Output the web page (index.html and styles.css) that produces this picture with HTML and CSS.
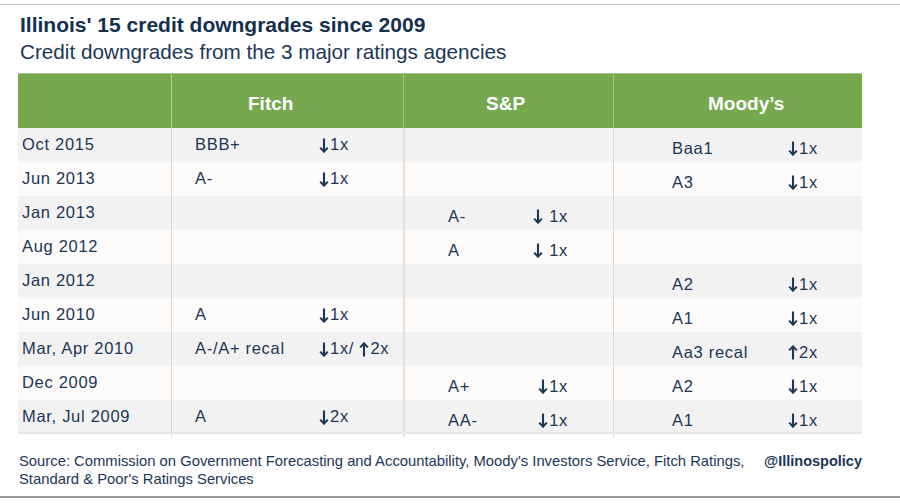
FILE: index.html
```html
<!DOCTYPE html>
<html>
<head>
<meta charset="utf-8">
<link rel="stylesheet" href="styles.css">
</head>
<body>
<div class="page">
  <div class="rule-top"></div>
  <div class="heading">
    <h1 class="title">Illinois' 15 credit downgrades since 2009</h1>
    <p class="subtitle">Credit downgrades from the 3 major ratings agencies</p>
  </div>
  <div class="table">
    <div class="row head">
      <div class="hc"></div>
      <div class="hc fitch">Fitch</div>
      <div class="hc sp">S&amp;P</div>
      <div class="hc moodys">Moody’s</div>
    </div>
    <div class="row odd">
      <div class="c date">Oct 2015</div>
      <div class="c fitch"><span class="r">BBB+</span><span class="d"><svg class="arr" viewBox="0 0 10 15"><path d="M5 0.5V13.5M1.2 9.6L5 13.6L8.8 9.6"/></svg>1x</span></div>
      <div class="c sp"></div>
      <div class="c moodys"><span class="r">Baa1</span><span class="d"><svg class="arr" viewBox="0 0 10 15"><path d="M5 0.5V13.5M1.2 9.6L5 13.6L8.8 9.6"/></svg>1x</span></div>
    </div>
    <div class="row even">
      <div class="c date">Jun 2013</div>
      <div class="c fitch"><span class="r">A-</span><span class="d"><svg class="arr" viewBox="0 0 10 15"><path d="M5 0.5V13.5M1.2 9.6L5 13.6L8.8 9.6"/></svg>1x</span></div>
      <div class="c sp"></div>
      <div class="c moodys"><span class="r">A3</span><span class="d"><svg class="arr" viewBox="0 0 10 15"><path d="M5 0.5V13.5M1.2 9.6L5 13.6L8.8 9.6"/></svg>1x</span></div>
    </div>
    <div class="row odd">
      <div class="c date">Jan 2013</div>
      <div class="c fitch"></div>
      <div class="c sp"><span class="r">A-</span><span class="d"><svg class="arr" viewBox="0 0 10 15"><path d="M5 0.5V13.5M1.2 9.6L5 13.6L8.8 9.6"/></svg> 1x</span></div>
      <div class="c moodys"></div>
    </div>
    <div class="row even">
      <div class="c date">Aug 2012</div>
      <div class="c fitch"></div>
      <div class="c sp"><span class="r">A</span><span class="d"><svg class="arr" viewBox="0 0 10 15"><path d="M5 0.5V13.5M1.2 9.6L5 13.6L8.8 9.6"/></svg> 1x</span></div>
      <div class="c moodys"></div>
    </div>
    <div class="row odd">
      <div class="c date">Jan 2012</div>
      <div class="c fitch"></div>
      <div class="c sp"></div>
      <div class="c moodys"><span class="r">A2</span><span class="d"><svg class="arr" viewBox="0 0 10 15"><path d="M5 0.5V13.5M1.2 9.6L5 13.6L8.8 9.6"/></svg>1x</span></div>
    </div>
    <div class="row even">
      <div class="c date">Jun 2010</div>
      <div class="c fitch"><span class="r">A</span><span class="d"><svg class="arr" viewBox="0 0 10 15"><path d="M5 0.5V13.5M1.2 9.6L5 13.6L8.8 9.6"/></svg>1x</span></div>
      <div class="c sp"></div>
      <div class="c moodys"><span class="r">A1</span><span class="d"><svg class="arr" viewBox="0 0 10 15"><path d="M5 0.5V13.5M1.2 9.6L5 13.6L8.8 9.6"/></svg>1x</span></div>
    </div>
    <div class="row odd">
      <div class="c date">Mar, Apr 2010</div>
      <div class="c fitch"><span class="r">A-/A+ recal</span><span class="d"><svg class="arr" viewBox="0 0 10 15"><path d="M5 0.5V13.5M1.2 9.6L5 13.6L8.8 9.6"/></svg>1x/ <svg class="arr" viewBox="0 0 10 15"><path d="M5 14.5V1.5M1.2 5.4L5 1.4L8.8 5.4"/></svg>2x</span></div>
      <div class="c sp"></div>
      <div class="c moodys"><span class="r">Aa3 recal</span><span class="d"><svg class="arr" viewBox="0 0 10 15"><path d="M5 14.5V1.5M1.2 5.4L5 1.4L8.8 5.4"/></svg>2x</span></div>
    </div>
    <div class="row even">
      <div class="c date">Dec 2009</div>
      <div class="c fitch"></div>
      <div class="c sp"><span class="r">A+</span><span class="d"><svg class="arr" viewBox="0 0 10 15"><path d="M5 0.5V13.5M1.2 9.6L5 13.6L8.8 9.6"/></svg>1x</span></div>
      <div class="c moodys"><span class="r">A2</span><span class="d"><svg class="arr" viewBox="0 0 10 15"><path d="M5 0.5V13.5M1.2 9.6L5 13.6L8.8 9.6"/></svg>1x</span></div>
    </div>
    <div class="row odd last">
      <div class="c date">Mar, Jul 2009</div>
      <div class="c fitch"><span class="r">A</span><span class="d"><svg class="arr" viewBox="0 0 10 15"><path d="M5 0.5V13.5M1.2 9.6L5 13.6L8.8 9.6"/></svg>2x</span></div>
      <div class="c sp"><span class="r">AA-</span><span class="d"><svg class="arr" viewBox="0 0 10 15"><path d="M5 0.5V13.5M1.2 9.6L5 13.6L8.8 9.6"/></svg>1x</span></div>
      <div class="c moodys"><span class="r">A1</span><span class="d"><svg class="arr" viewBox="0 0 10 15"><path d="M5 0.5V13.5M1.2 9.6L5 13.6L8.8 9.6"/></svg>1x</span></div>
    </div>
    <div class="row tail">
      <div class="c date"></div>
      <div class="c fitch"></div>
      <div class="c sp"></div>
      <div class="c moodys"></div>
    </div>
  </div>
  <div class="footer">
    <p class="source">Source: Commission on Government Forecasting and Accountability, Moody's Investors Service, Fitch Ratings,<br>Standard &amp; Poor's Ratings Services</p>
    <p class="handle">@Illinospolicy</p>
  </div>
  <div class="rule-bottom"></div>
</div>
</body>
</html>
```

FILE: styles.css
```css
html, body {
  margin: 0;
  padding: 0;
  background: #ffffff;
}

.page {
  width: 900px;
  height: 503px;
  overflow: hidden;
  font-family: "Liberation Sans", Arial, sans-serif;
  color: #1b3656;
}

.rule-top {
  margin-top: 4px;
  height: 1px;
  background: #c4c4c4;
}

.heading {
  padding-left: 20px;
}

.title {
  margin: 8px 0 0 0;
  font-size: 21px;
  line-height: 24px;
  font-weight: bold;
  color: #14304f;
}

.subtitle {
  margin: 3px 0 0 0;
  font-size: 20.7px;
  line-height: 24px;
  font-weight: normal;
  color: #1b3656;
}

.table {
  margin: 9px 0 0 18px;
  width: 844px;
}

.row {
  display: grid;
  grid-template-columns: 153px 232px 210px 249px;
}

.row.head {
  height: 55px;
  background: #76a84f;
  border-top: 1px solid #a4c588;
  box-sizing: border-box;
}

.hc {
  color: #ffffff;
  font-weight: bold;
  font-size: 19px;
  line-height: 48px;
  padding-top: 6px;
  white-space: nowrap;
}

.hc.fitch {
  padding-left: 76px;
  border-left: 1px solid #b9d3a4;
}

.hc.sp {
  padding-left: 82px;
  border-left: 1px solid #a6c18f;
}

.hc.moodys {
  padding-left: 94px;
  border-left: 1px solid #a6c18f;
}

.row.odd {
  background: #f2f2f2;
}

.row.even {
  background: #fcfbfa;
}

.row.last {
  border-bottom: 2px solid #e9e4df;
}

.c {
  height: 34px;
  box-sizing: border-box;
  font-size: 16.5px;
  line-height: 18px;
  letter-spacing: 0.7px;
  white-space: nowrap;
  padding-top: 7px;
}

.row.last .c {
  height: 32px;
}

.row.tail .c {
  height: 3px;
  padding: 0;
}

.c.date {
  padding-left: 4px;
}

.c.fitch {
  padding-left: 23px;
  border-left: 1px solid #ddd5ce;
}

.c.sp {
  padding-left: 43px;
  padding-top: 10.5px;
  border-left: 2px solid #e8dfd8;
}

.c.moodys {
  padding-left: 58px;
  padding-top: 10.5px;
  border-left: 1px solid #ddd5ce;
}

.r {
  display: inline-block;
}

.fitch .r {
  width: 124px;
}

.sp .r {
  width: 84px;
}

.sp .d {
  display: inline-block;
  width: 36px;
  text-align: right;
}

.moodys .r {
  width: 116px;
}

.arr {
  width: 10px;
  height: 15px;
  vertical-align: -2.5px;
  margin-right: 1px;
}

.arr path {
  fill: none;
  stroke: #1b3656;
  stroke-width: 2.1;
}

.footer {
  margin: 15px 0 0 19px;
  width: 843px;
  display: flex;
  justify-content: space-between;
  align-items: flex-start;
}

.source {
  margin: 0;
  font-size: 14.8px;
  line-height: 18px;
  color: #1b3656;
}

.handle {
  margin: 0;
  font-size: 14.5px;
  line-height: 18px;
  font-weight: bold;
  color: #1b3656;
}

.rule-bottom {
  margin-top: 8px;
  height: 2px;
  background: #9a9a9a;
}
```
